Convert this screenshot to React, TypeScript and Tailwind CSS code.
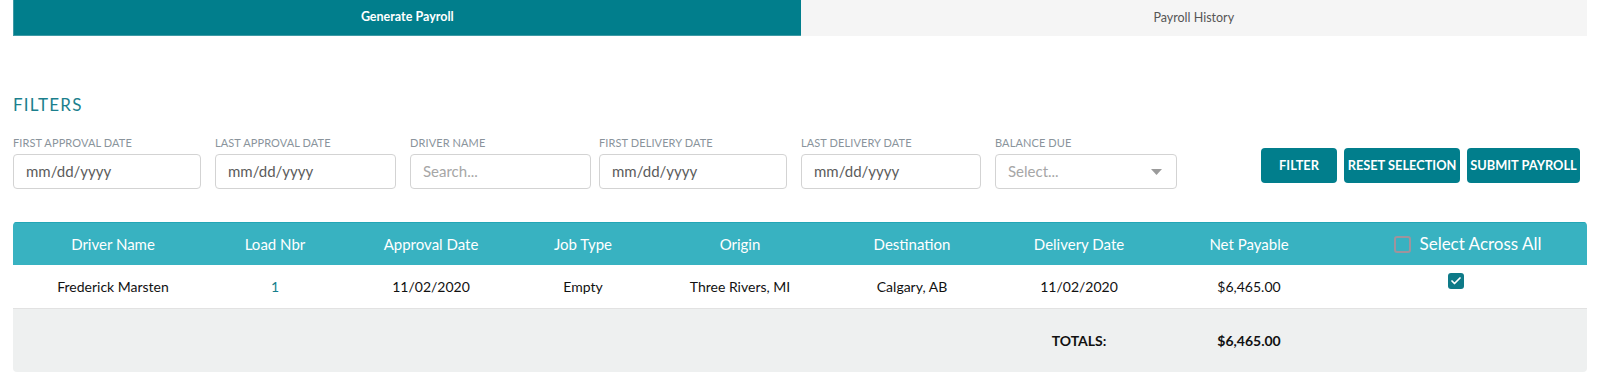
import { Check } from 'lucide-react';

const columns = [
  'Driver Name',
  'Load Nbr',
  'Approval Date',
  'Job Type',
  'Origin',
  'Destination',
  'Delivery Date',
  'Net Payable',
];

const gridCols = 'grid grid-cols-[200px_124px_188px_116px_198px_146px_188px_152px_1fr]';

function Field({ label, placeholder, width, muted, select, className = '' }: { label: string; placeholder: string; width: string; muted?: boolean; select?: boolean; className?: string }) {
  return (
    <div className={`flex flex-col ${width} ${className}`}>
      <label className="text-[11px] leading-[14px] text-[#8a949c] uppercase tracking-[0.1px] mb-[4px]">{label}</label>
      <div className="h-[35px] border border-[#d3d3d3] rounded-[4px] flex items-center px-[12px] bg-white">
        <span className={`text-[15px] ${muted ? 'text-[#a6a6a6]' : 'text-[#5c5c5c]'}`}>{placeholder}</span>
        {select && (
          <svg className="ml-auto mr-[2px]" width="11" height="6" viewBox="0 0 11 6">
            <path d="M0 0 L11 0 L5.5 6 Z" fill="#9b9b9b" />
          </svg>
        )}
      </div>
    </div>
  );
}

export default function App() {
  return (
    <div className="px-[13px] font-['Lato',sans-serif] bg-white min-h-[383px]">
      {/* Tabs */}
      <div className="flex h-[36px]">
        <div className="flex-1 bg-[#017e8c] border-l border-b border-[#3e9aa5] flex items-center justify-center text-white text-[12.5px] font-bold">
          Generate Payroll
        </div>
        <div className="flex-1 bg-[#f5f5f5] flex items-center justify-center text-[#555] text-[12.5px]">
          Payroll History
        </div>
      </div>

      {/* Filters */}
      <h2 className="mt-[58px] text-[#1b7f8d] text-[17px] leading-[22px] tracking-[1.2px] uppercase">Filters</h2>
      <div className="flex items-start mt-[20px]">
        <div className="flex gap-[14px]">
          <Field label="First Approval Date" placeholder="mm/dd/yyyy" width="w-[188px]" />
          <Field label="Last Approval Date" placeholder="mm/dd/yyyy" width="w-[181px]" />
          <Field label="Driver Name" placeholder="Search..." width="w-[181px]" muted />
          <Field label="First Delivery Date" placeholder="mm/dd/yyyy" width="w-[188px]" className="-ml-[6px]" />
          <Field label="Last Delivery Date" placeholder="mm/dd/yyyy" width="w-[180px]" />
          <Field label="Balance Due" placeholder="Select..." width="w-[182px]" muted select />
        </div>
        <div className="ml-auto mr-[7px] mt-[12px] flex gap-[7px]">
          <button className="w-[76px] h-[35px] rounded-[4px] bg-[#017e8c] text-white text-[12.8px] font-bold uppercase">Filter</button>
          <button className="w-[116px] h-[35px] rounded-[4px] bg-[#017e8c] text-white text-[12.8px] font-bold uppercase">Reset Selection</button>
          <button className="w-[113px] h-[35px] rounded-[4px] bg-[#017e8c] text-white text-[12.8px] font-bold uppercase">Submit Payroll</button>
        </div>
      </div>

      {/* Table */}
      <div className="mt-[33px] rounded-[4px] overflow-hidden">
        <div className={`${gridCols} h-[43px] bg-[#38b2c1] border-t border-[#23a6b6] items-center text-white text-[15px]`}>
          {columns.map((c) => (
            <div key={c} className="text-center">{c}</div>
          ))}
          <div className="flex items-center justify-center gap-[8px] pl-[24px]">
            <span className="w-[17px] h-[17px] rounded-[3px] border-2 border-[#a0939c]" />
            <span className="text-[17px]">Select Across All</span>
          </div>
        </div>
        <div className={`${gridCols} h-[44px] bg-white border-b border-[#e2e2e2] items-center text-[14px] text-[#111]`}>
          <div className="text-center">Frederick Marsten</div>
          <div className="text-center text-[#167e8c]">1</div>
          <div className="text-center">11/02/2020</div>
          <div className="text-center">Empty</div>
          <div className="text-center">Three Rivers, MI</div>
          <div className="text-center">Calgary, AB</div>
          <div className="text-center">11/02/2020</div>
          <div className="text-center">$6,465.00</div>
          <div className="flex justify-center -mt-[12px]">
            <span className="w-[16px] h-[16px] rounded-[3px] bg-[#0e7a88] flex items-center justify-center">
              <Check size={12} strokeWidth={3.5} color="white" />
            </span>
          </div>
        </div>
        <div className={`${gridCols} h-[63px] bg-[#eef0f0] items-center text-[14px] font-bold text-[#111]`}>
          <div />
          <div />
          <div />
          <div />
          <div />
          <div />
          <div className="text-center">TOTALS:</div>
          <div className="text-center">$6,465.00</div>
          <div />
        </div>
      </div>
    </div>
  );
}
